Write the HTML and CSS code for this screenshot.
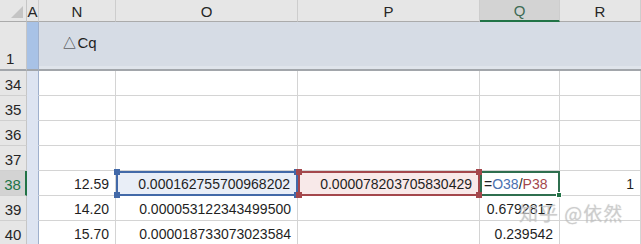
FILE: index.html
```html
<!DOCTYPE html>
<html lang="zh">
<head>
  <meta charset="UTF-8">
  <title>Sheet</title>
  <link rel="stylesheet" href="styles.css">
</head>
<body>
  <div id="sheet">
    <!-- column headers -->
    <div class="corner">
      <svg width="12" height="12" viewBox="0 0 12 12"><polygon points="12,0 12,12 0,12" fill="#c4c4c4"/></svg>
    </div>
    <div class="ch col-a">A</div>
    <div class="ch">N</div>
    <div class="ch">O</div>
    <div class="ch">P</div>
    <div class="ch active">Q</div>
    <div class="ch">R</div>

    <!-- row 1 -->
    <div class="rh first">1</div>
    <div class="a-band first"></div>
    <div class="cell first title">△Cq</div>
    <div class="cell first"></div>
    <div class="cell first"></div>
    <div class="cell first"></div>
    <div class="cell first"></div>

    <div class="rh">34</div><div class="a-band"></div>
    <div class="cell"></div><div class="cell"></div><div class="cell"></div><div class="cell"></div><div class="cell"></div>

    <div class="rh">35</div><div class="a-band"></div>
    <div class="cell"></div><div class="cell"></div><div class="cell"></div><div class="cell"></div><div class="cell"></div>

    <div class="rh">36</div><div class="a-band"></div>
    <div class="cell"></div><div class="cell"></div><div class="cell"></div><div class="cell"></div><div class="cell"></div>

    <div class="rh">37</div><div class="a-band"></div>
    <div class="cell"></div><div class="cell"></div><div class="cell"></div><div class="cell"></div><div class="cell"></div>

    <div class="rh active">38</div><div class="a-band"></div>
    <div class="cell num">12.59</div>
    <div class="cell num ref-blue">0.000162755700968202
      <span class="handle tl"></span><span class="handle tr"></span><span class="handle bl"></span><span class="handle br"></span>
    </div>
    <div class="cell num ref-red">0.000078203705830429
      <span class="handle tl"></span><span class="handle tr"></span><span class="handle bl"></span><span class="handle br"></span>
    </div>
    <div class="cell editing"><span class="eq">=</span><span class="blue">O38</span><span class="eq">/</span><span class="red">P38</span>
      <span class="handle br"></span>
    </div>
    <div class="cell num">1</div>

    <div class="rh">39</div><div class="a-band"></div>
    <div class="cell num">14.20</div>
    <div class="cell num">0.000053122343499500</div>
    <div class="cell"></div>
    <div class="cell num">0.6792817</div>
    <div class="cell"></div>

    <div class="rh">40</div><div class="a-band"></div>
    <div class="cell num">15.70</div>
    <div class="cell num">0.000018733073023584</div>
    <div class="cell"></div>
    <div class="cell num">0.239542</div>
    <div class="cell"></div>

    <div class="watermark">知乎 @依然</div>
  </div>
</body>
</html>
```

FILE: styles.css
```css
* {
  margin: 0;
  padding: 0;
  box-sizing: border-box;
}

html,
body {
  width: 641px;
  height: 244px;
  overflow: hidden;
  background: #fff;
  font-family: 'Liberation Sans', Arial, sans-serif;
}

#sheet {
  position: relative;
  display: grid;
  grid-template-columns: 27px 12px 77px 182px 182px 80px 81px;
  grid-template-rows: 22px 49px repeat(7, 25px);
  font-size: 14px;
  color: #1f1f1f;
}

.corner {
  background: #e6e6e6;
  border-right: 1px solid #c6c6c6;
  border-bottom: 1px solid #ababab;
  display: flex;
  align-items: flex-end;
  justify-content: flex-end;
  padding: 0 3px 3px 0;
}

.ch {
  background: #e6e6e6;
  border-right: 1px solid #cdcdcd;
  border-bottom: 1px solid #ababab;
  display: flex;
  align-items: center;
  justify-content: center;
  font-size: 15px;
  color: #262626;
  padding-top: 1px;
}

.ch.col-a {
  padding: 1px 0 0 0;
}

.ch.active {
  background: #d3d3d3;
  color: #3e6b55;
  border-bottom: 2px solid #217346;
}

.rh {
  background: #e6e6e6;
  border-right: 1px solid #c6c6c6;
  border-bottom: 1px solid #d0d0d0;
  display: flex;
  align-items: flex-end;
  justify-content: center;
  padding-bottom: 2px;
  font-size: 15px;
  color: #262626;
}

.rh.first {
  justify-content: flex-start;
  padding-left: 6px;
  border-bottom: 2px solid #a2a6ab;
}

.rh.active {
  background: #d3d3d3;
  color: #217346;
  border-right: 2px solid #217346;
}

.a-band {
  background: #dde4f1;
  border-right: 1px solid #9fb0cc;
  border-bottom: 1px solid #dde4f1;
}

.a-band.first {
  background: #a8c2e6;
  border-bottom: 2px solid #a2a6ab;
}

.cell {
  position: relative;
  border-right: 1px solid #d4d4d4;
  border-bottom: 1px solid #d4d4d4;
  display: flex;
  align-items: flex-end;
  padding: 0 6px 3px 4px;
  white-space: nowrap;
}

.cell.first {
  background: #d6dce5;
  border-right: none;
  border-bottom: 2px solid #a2a6ab;
  box-shadow: inset 0 -3px 0 #dfe4eb;
}

.cell.title {
  align-items: center;
  justify-content: center;
  padding: 0 0 4px 4px;
  font-size: 15px;
}

.num {
  justify-content: flex-end;
}

.ref-blue {
  background: #e9eef7;
  border: 2px solid #4269a8;
  padding-bottom: 2px;
}

.ref-red {
  background: #f8e9e9;
  border: 2px solid #a4474c;
  padding-bottom: 2px;
}

.editing {
  border: 2px solid #2f6f4f;
  padding: 0 4px 2px 2px;
}

.eq {
  color: #1f1f1f;
}

.blue {
  color: #4a72b0;
}

.red {
  color: #a4474c;
}

.handle {
  position: absolute;
  width: 6px;
  height: 6px;
  z-index: 2;
}

.ref-blue .handle {
  background: #4269a8;
}

.ref-red .handle {
  background: #a4474c;
}

.editing .handle {
  background: #217346;
  border: 1px solid #fff;
}

.tl {
  left: -4px;
  top: -4px;
}

.tr {
  right: -4px;
  top: -4px;
}

.bl {
  left: -4px;
  bottom: -4px;
}

.br {
  right: -4px;
  bottom: -4px;
}

.watermark {
  position: absolute;
  left: 519px;
  top: 199px;
  font-family: 'Noto Sans CJK SC', sans-serif;
  font-size: 19px;
  color: rgba(200, 200, 200, 0.75);
  text-shadow: 0 0 1px rgba(120, 120, 120, 0.3);
  letter-spacing: 1px;
  pointer-events: none;
}
```
